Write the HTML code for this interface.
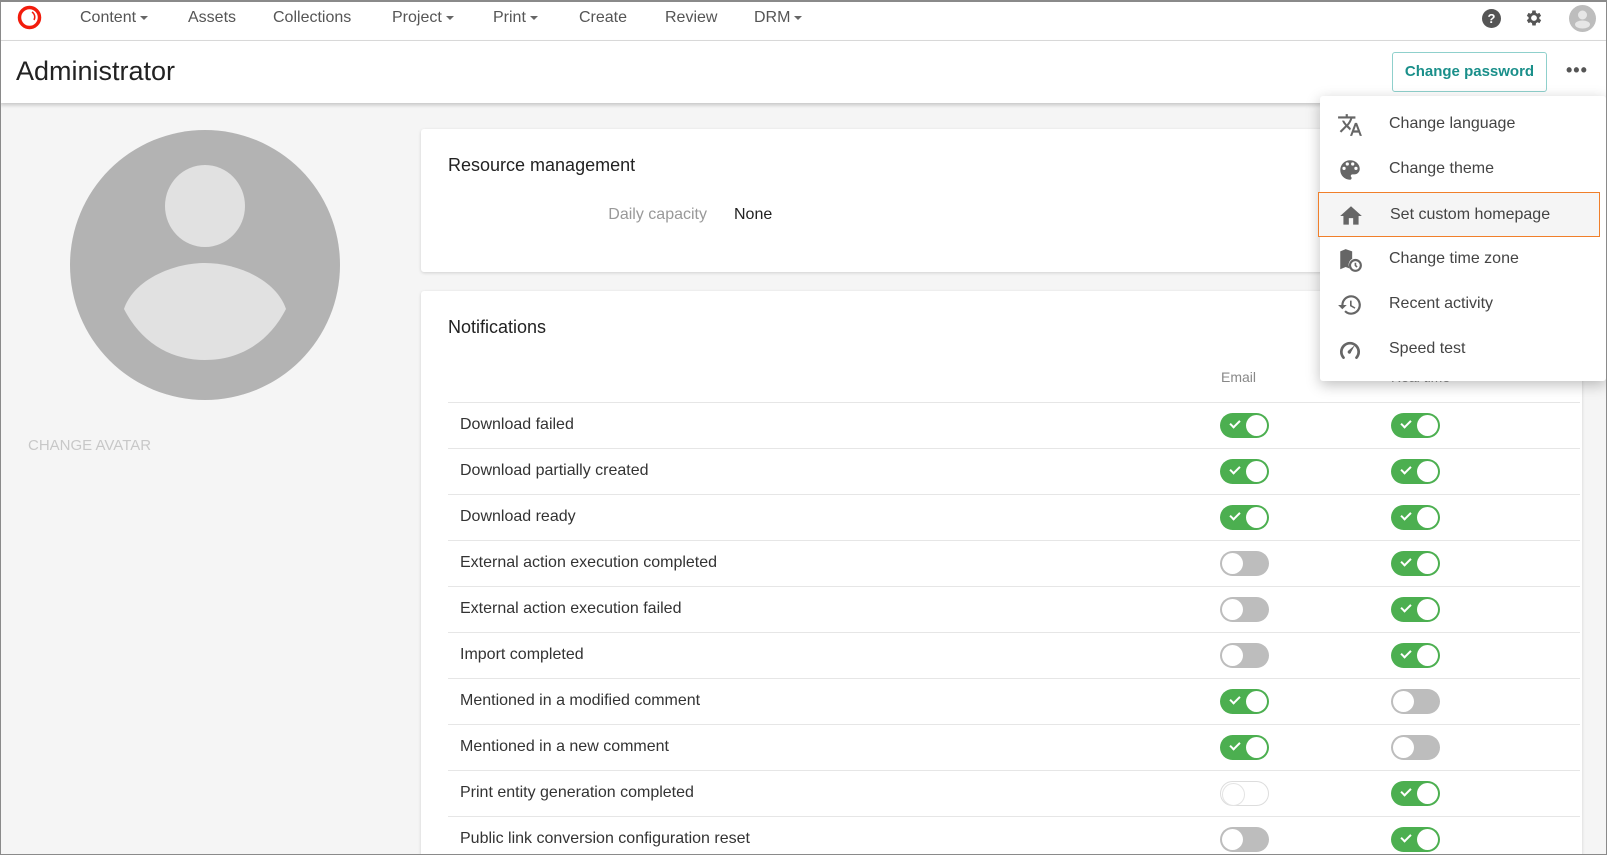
<!DOCTYPE html>
<html style="width:1607px;height:855px;overflow:hidden"><head><meta charset="utf-8"><style>
*{box-sizing:border-box;margin:0;padding:0}
body{width:1607px;height:855px;overflow:hidden;font-family:"Liberation Sans",sans-serif;background:#f5f5f5;position:relative;color:#333}
.frame{position:absolute;left:0;top:0;width:1607px;height:855px;border:1px solid #8a8a8a;border-top:2px solid #8a8a8a;pointer-events:none;z-index:50}
.nav{position:absolute;left:0;top:0;width:1607px;height:41px;background:#fff;border-bottom:1px solid #ddd}
.nav span{position:absolute;top:9px;font-size:16px;color:#555}
.car{display:inline-block;border-left:4px solid transparent;border-right:4px solid transparent;border-top:4px solid #666;vertical-align:middle;margin-left:4px}
.hdr{position:absolute;left:0;top:41px;width:1607px;height:62px;background:#fff;box-shadow:0 2px 4px rgba(0,0,0,.2)}
.hdr h1{position:absolute;left:16px;top:15px;font-size:27px;font-weight:normal;color:#222}
.btn{position:absolute;left:1392px;top:11px;width:155px;height:40px;border:1px solid #8fd0cc;border-radius:3px;color:#1a8f8a;font-size:15px;font-weight:bold;text-align:center;line-height:38px}
.card{position:absolute;left:421px;width:1161px;background:#fff;border-radius:3px;box-shadow:0 1px 3px rgba(0,0,0,.15)}
.ttl{position:absolute;left:27px;font-size:18px;color:#222}
.row{position:absolute;left:27px;width:1132px;height:46px;border-top:1px solid #e6e6e6}
.row .t{position:absolute;left:12px;top:13px;font-size:16px;color:#333}
.tg{position:absolute;top:10px;width:49px;height:25px;border-radius:13px}
.on{background:#4caf50}
.on::after{content:"";position:absolute;right:2px;top:2px;width:21px;height:21px;border-radius:50%;background:#fff}
.on::before{content:"";position:absolute;left:10px;top:7px;width:8px;height:4px;border-left:2px solid #fff;border-bottom:2px solid #fff;transform:rotate(-45deg)}
.off{background:#bdbdbd}
.off::after{content:"";position:absolute;left:2px;top:2px;width:21px;height:21px;border-radius:50%;background:#fff}
.dis{background:#fff;border:1px solid #ddd}
.dis::after{content:"";position:absolute;left:1px;top:1px;width:21px;height:21px;border-radius:50%;background:#fff;border:1px solid #e4e4e4}
.e{left:772px}.r{left:943px}
.menu{position:absolute;left:1320px;top:96px;width:286px;height:285px;background:#fff;border-radius:3px;box-shadow:0 4px 14px rgba(0,0,0,.25);z-index:10}
.mi{position:absolute;left:0;width:286px;height:45px}
.mi .tx{position:absolute;left:69px;top:13px;font-size:16px;color:#444}
.mi svg{position:absolute;left:17px;top:10px}
.hl{background:#f5f5f5;border:1px solid #f07f2a;width:282px;left:-2px}
</style></head><body>
<div class="nav">
<svg style="position:absolute;left:17px;top:5px" width="25" height="25" viewBox="0 0 25 25"><circle cx="12.5" cy="12.5" r="10" fill="none" stroke="#f21c0c" stroke-width="3.5"/><path d="M15 7a6 6 0 0 1 2 8" stroke="#f21c0c" stroke-width="1.5" fill="none"/></svg>
<span style="left:80px">Content<i class="car"></i></span>
<span style="left:188px">Assets</span>
<span style="left:273px">Collections</span>
<span style="left:392px">Project<i class="car"></i></span>
<span style="left:493px">Print<i class="car"></i></span>
<span style="left:579px">Create</span>
<span style="left:665px">Review</span>
<span style="left:754px">DRM<i class="car"></i></span>
<svg style="position:absolute;left:1482px;top:9px" width="19" height="19" viewBox="0 0 19 19"><circle cx="9.5" cy="9.5" r="9.5" fill="#555"/><text x="9.5" y="14" text-anchor="middle" font-size="13" font-weight="bold" fill="#fff" font-family="Liberation Sans">?</text></svg>
<svg style="position:absolute;left:1524px;top:8px" width="20" height="20" viewBox="0 0 24 24"><path fill="#555" d="M19.4 13a7.5 7.5 0 0 0 0-2l2.1-1.6-2-3.5-2.5 1a7 7 0 0 0-1.7-1L15 3h-4l-.4 2.9a7 7 0 0 0-1.7 1l-2.5-1-2 3.5L6.5 11a7.5 7.5 0 0 0 0 2l-2.1 1.6 2 3.5 2.5-1a7 7 0 0 0 1.7 1L11 21h4l.4-2.9a7 7 0 0 0 1.7-1l2.5 1 2-3.5zM13 15.5a3.5 3.5 0 1 1 0-7 3.5 3.5 0 0 1 0 7z" transform="translate(-1 0)"/></svg>
<svg style="position:absolute;left:1569px;top:5px" width="27" height="27" viewBox="0 0 27 27"><circle cx="13.5" cy="13.5" r="13.5" fill="#bdbdbd"/><circle cx="13.5" cy="10" r="4.5" fill="#e6e6e6"/><ellipse cx="13.5" cy="19.5" rx="7.5" ry="4" fill="#e6e6e6"/></svg>
</div>
<div class="hdr"><h1>Administrator</h1><div class="btn">Change password</div>
<div style="position:absolute;left:1566px;top:19px;font-size:18px;color:#555;letter-spacing:1px;font-weight:bold">•••</div></div>
<svg style="position:absolute;left:70px;top:130px" width="270" height="270" viewBox="0 0 270 270"><circle cx="135" cy="135" r="135" fill="#b3b3b3"/><ellipse cx="135" cy="76" rx="40" ry="41" fill="#e1e1e1"/><path d="M54 179c10-30 50-46 81-46s71 16 81 46c-18 35-48 51-81 51s-63-16-81-51z" fill="#e1e1e1"/></svg>
<div style="position:absolute;left:28px;top:437px;font-size:15px;color:#c8c8c8">CHANGE AVATAR</div>
<div class="card" style="top:129px;height:143px">
<div class="ttl" style="top:26px">Resource management</div>
<div style="position:absolute;right:875px;top:77px;font-size:16px;color:#999">Daily capacity</div>
<div style="position:absolute;left:313px;top:77px;font-size:16px;color:#222">None</div>
</div>
<div class="card" style="top:291px;height:570px">
<div class="ttl" style="top:26px">Notifications</div>
<div style="position:absolute;left:800px;top:78px;font-size:14px;color:#888">Email</div>
<div style="position:absolute;left:970px;top:78px;font-size:14px;color:#888">Real time</div>
<div class="row" style="top:111px"><div class="t">Download failed</div><div class="tg on e"></div><div class="tg on r"></div></div>
<div class="row" style="top:157px"><div class="t">Download partially created</div><div class="tg on e"></div><div class="tg on r"></div></div>
<div class="row" style="top:203px"><div class="t">Download ready</div><div class="tg on e"></div><div class="tg on r"></div></div>
<div class="row" style="top:249px"><div class="t">External action execution completed</div><div class="tg off e"></div><div class="tg on r"></div></div>
<div class="row" style="top:295px"><div class="t">External action execution failed</div><div class="tg off e"></div><div class="tg on r"></div></div>
<div class="row" style="top:341px"><div class="t">Import completed</div><div class="tg off e"></div><div class="tg on r"></div></div>
<div class="row" style="top:387px"><div class="t">Mentioned in a modified comment</div><div class="tg on e"></div><div class="tg off r"></div></div>
<div class="row" style="top:433px"><div class="t">Mentioned in a new comment</div><div class="tg on e"></div><div class="tg off r"></div></div>
<div class="row" style="top:479px"><div class="t">Print entity generation completed</div><div class="tg dis e"></div><div class="tg on r"></div></div>
<div class="row" style="top:525px"><div class="t">Public link conversion configuration reset</div><div class="tg off e"></div><div class="tg on r"></div></div>
</div>
<div class="menu">
<div class="mi" style="top:6px"><svg width="26" height="26" viewBox="0 0 24 24"><path fill="#666" d="M12.9 15.1l-2.5-2.5v0c1.7-1.9 3-4.1 3.7-6.5H17V4h-7V2H8v2H1v2h11.2c-.7 1.9-1.7 3.8-3.2 5.4-1-1.1-1.8-2.2-2.4-3.4h-2c.7 1.6 1.7 3.2 3 4.6l-5.1 5 1.4 1.4 5-5 3.1 3.1.8-2zM18.5 10h-2L12 22h2l1.1-3h4.8l1.1 3h2l-4.5-12zm-2.6 7l1.6-4.3 1.6 4.3h-3.2z"/></svg><div class="tx">Change language</div></div>
<div class="mi" style="top:51px"><svg width="26" height="26" viewBox="0 0 24 24"><path fill="#666" d="M12 3a9 9 0 0 0 0 18c.8 0 1.5-.7 1.5-1.5 0-.4-.1-.7-.4-1-.2-.3-.4-.6-.4-1 0-.8.7-1.5 1.5-1.5H16a5 5 0 0 0 5-5c0-4.4-4-8-9-8zm-5.5 9a1.5 1.5 0 1 1 0-3 1.5 1.5 0 0 1 0 3zm3-4a1.5 1.5 0 1 1 0-3 1.5 1.5 0 0 1 0 3zm5 0a1.5 1.5 0 1 1 0-3 1.5 1.5 0 0 1 0 3zm3 4a1.5 1.5 0 1 1 0-3 1.5 1.5 0 0 1 0 3z"/></svg><div class="tx">Change theme</div></div>
<div class="mi hl" style="top:96px"><svg width="26" height="26" viewBox="0 0 24 24" style="left:19px"><path fill="#666" d="M10 20v-6h4v6h5v-8h3L12 3 2 12h3v8z"/></svg><div class="tx" style="left:71px">Set custom homepage</div></div>
<div class="mi" style="top:141px"><svg width="26" height="26" viewBox="0 0 24 24"><path fill="#666" d="M3 4l5-2 6 2v7a6 6 0 0 0-2 9l-4-1.5-5 2z"/><circle cx="17" cy="17" r="5" fill="none" stroke="#666" stroke-width="2"/><path d="M17 14.5V17l1.5 1.5" stroke="#666" stroke-width="1.5" fill="none"/></svg><div class="tx">Change time zone</div></div>
<div class="mi" style="top:186px"><svg width="26" height="26" viewBox="0 0 24 24"><path fill="#666" d="M13 3a9 9 0 0 0-9 9H1l3.9 3.9L9 12H6a7 7 0 1 1 2.1 5l-1.4 1.4A9 9 0 1 0 13 3zm-1 5v5l4.3 2.5.7-1.2-3.5-2.1V8z"/></svg><div class="tx">Recent activity</div></div>
<div class="mi" style="top:231px"><svg width="26" height="26" viewBox="0 0 24 24"><path d="M6 19a8 8 0 1 1 12 0" fill="none" stroke="#666" stroke-width="2.5" stroke-linecap="round"/><path fill="#666" d="M16.5 7.5L13 14a1.6 1.6 0 1 1-2.3-1.6z"/></svg><div class="tx">Speed test</div></div>
</div>
<div class="frame"></div>
</body></html>
